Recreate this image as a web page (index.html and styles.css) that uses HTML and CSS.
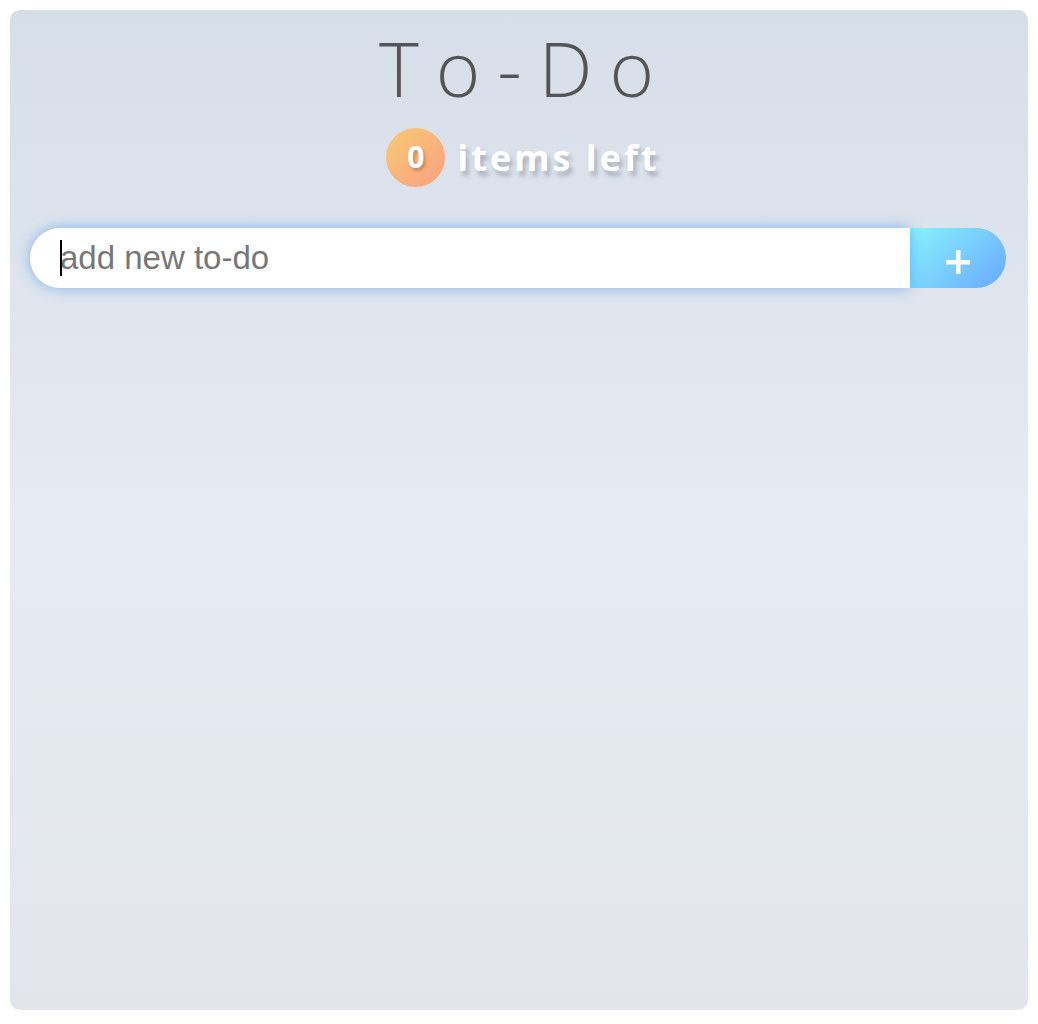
FILE: index.html
```html
<!DOCTYPE html>
<html>
<head>
<meta charset="utf-8">
<link rel="stylesheet" href="styles.css">
</head>
<body>
<div class="app">
  <h1 class="title">To-Do</h1>
  <div class="count">
    <span class="badge">0</span>
    <span class="left">items left</span>
  </div>
  <form class="add">
    <div class="field">
      <span class="caret"></span>
      <input class="input" type="text" placeholder="add new to-do">
    </div>
    <button class="btn" type="button" aria-label="add">
      <svg class="plus" width="24" height="24" viewBox="0 0 24 24"><rect x="10" y="0" width="4.5" height="24" fill="#fff"/><rect x="0" y="10" width="24" height="4.5" fill="#fff"/></svg>
    </button>
  </form>
</div>
</body>
</html>
```
FILE: styles.css
```css
html, body { margin: 0; padding: 0; background: #fff; }
body { padding: 10px; }
.app {
  width: 1018px;
  height: 1000px;
  box-sizing: border-box;
  border-radius: 10px;
  background: linear-gradient(180deg, #d6dee7 0%, #e6eaf2 50%, #e2e6ec 100%);
  padding: 20px 22px 0 20px;
  display: flex;
  flex-direction: column;
  align-items: center;
}
.title {
  margin: -2px 0 0 0;
  font-family: "Open Sans", sans-serif;
  font-weight: 300;
  font-size: 76px;
  line-height: 80px;
  letter-spacing: 17px;
  color: #555;
  padding-left: 14px;
}
.count {
  margin-top: 20px;
  display: flex;
  align-items: center;
  gap: 12px;
  margin-left: 10px;
}
.badge {
  width: 59px;
  height: 59px;
  border-radius: 50%;
  background: linear-gradient(135deg, #f6cb72 0%, #fb9e84 100%);
  color: #fff;
  font-family: "Open Sans", sans-serif;
  font-weight: 700;
  font-size: 30px;
  display: flex;
  align-items: center;
  justify-content: center;
  text-shadow: 2px 3px 3px rgba(120,80,60,0.4);
  padding-bottom: 2px;
  box-sizing: border-box;
}
.left {
  font-family: "Open Sans", sans-serif;
  font-weight: 700;
  font-size: 36px;
  letter-spacing: 3px;
  color: #fff;
  text-shadow: 3px 5px 4px rgba(110,120,140,0.45);
}
.add {
  margin-top: 41px;
  width: 976px;
  display: flex;
  height: 60px;
}
.field {
  position: relative;
  flex: 1;
  background: #fff;
  border-radius: 30px 0 0 30px;
  box-shadow: 0 0 14px rgba(80,150,240,0.65);
  display: flex;
}
.input {
  flex: 1;
  border: none;
  outline: none;
  background: transparent;
  padding: 0 0 0 30px;
  font-family: "Liberation Sans", Arial, sans-serif;
  font-size: 33px;
  color: #333;
  border-radius: 30px 0 0 30px;
}
.input::placeholder { color: #777; }
.caret {
  position: absolute;
  left: 30px;
  top: 12px;
  width: 2px;
  height: 36px;
  background: #000;
}
.btn {
  width: 96px;
  border: none;
  border-radius: 0 30px 30px 0;
  background: linear-gradient(135deg, #88f3fb 0%, #6aa8ff 100%);
  padding: 8px 0 0 0;
  display: flex;
  align-items: center;
  justify-content: center;
  cursor: pointer;
}
.plus { display: block; }
```
